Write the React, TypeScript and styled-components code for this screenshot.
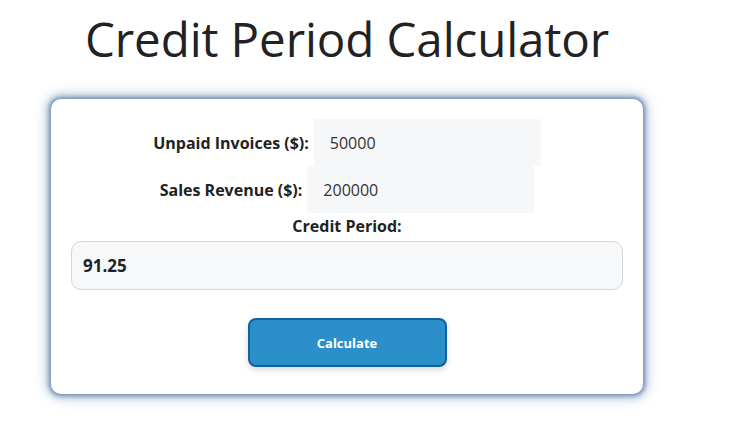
import styled, { createGlobalStyle } from 'styled-components';

const GlobalStyle = createGlobalStyle`
  body {
    margin: 0;
    background: #ffffff;
    font-family: "Open Sans", "Noto Sans", "DejaVu Sans", sans-serif;
    color: #212529;
  }
`;

const Page = styled.div`
  width: 592px;
  margin-left: 51px;
  padding-bottom: 20px;
  display: flex;
  flex-direction: column;
  align-items: center;
`;

const Title = styled.h1`
  margin: 9px 0 0;
  height: 90px;
  font-size: 47.5px;
  font-weight: 400;
  line-height: 60px;
  color: #222;
  letter-spacing: -0.1px;
`;

const Card = styled.div`
  width: 100%;
  box-sizing: border-box;
  height: 295px;
  background: #fff;
  border-radius: 10px;
  box-shadow: 0 0 4px 2px rgba(90, 120, 160, 0.75), 0 0 12px 4px rgba(110, 145, 190, 0.55);
  padding: 20px 20px 0;
  display: flex;
  flex-direction: column;
  align-items: center;
`;

const Row = styled.div`
  display: flex;
  align-items: center;
  gap: 5px;
`;

const Label = styled.label`
  font-weight: 700;
  font-size: 16px;
  color: #222;
`;

const Input = styled.input`
  width: 227px;
  height: 47px;
  box-sizing: border-box;
  border: none;
  border-radius: 2px;
  background: #f6f7f9;
  padding: 0 16px;
  font-family: inherit;
  font-size: 16px;
  color: #333;
  outline: none;
`;

const ResultLabel = styled(Label)`
  margin-top: 3px;
  line-height: 20px;
`;

const Result = styled.div`
  align-self: stretch;
  margin-top: 5px;
  height: 49px;
  box-sizing: border-box;
  border: 1px solid #d4d6da;
  border-radius: 10px;
  background: #f7f8fa;
  display: flex;
  align-items: center;
  padding: 0 11px;
  font-weight: 700;
  font-size: 17px;
  color: #222;
`;

const Button = styled.button`
  margin-top: 28px;
  width: 199px;
  height: 49px;
  background: #2b8fca;
  border: 2px solid #11609f;
  border-radius: 8px;
  color: #fff;
  font-family: inherit;
  font-weight: 700;
  font-size: 13px;
  box-shadow: 0 3px 6px rgba(0, 0, 0, 0.15);
  cursor: pointer;
`;

export default function App() {
  return (
    <>
      <GlobalStyle />
      <Page>
        <Title>Credit Period Calculator</Title>
        <Card>
          <Row>
            <Label>Unpaid Invoices ($):</Label>
            <Input defaultValue="50000" />
          </Row>
          <Row>
            <Label>Sales Revenue ($):</Label>
            <Input defaultValue="200000" />
          </Row>
          <ResultLabel>Credit Period:</ResultLabel>
          <Result>91.25</Result>
          <Button>Calculate</Button>
        </Card>
      </Page>
    </>
  );
}
